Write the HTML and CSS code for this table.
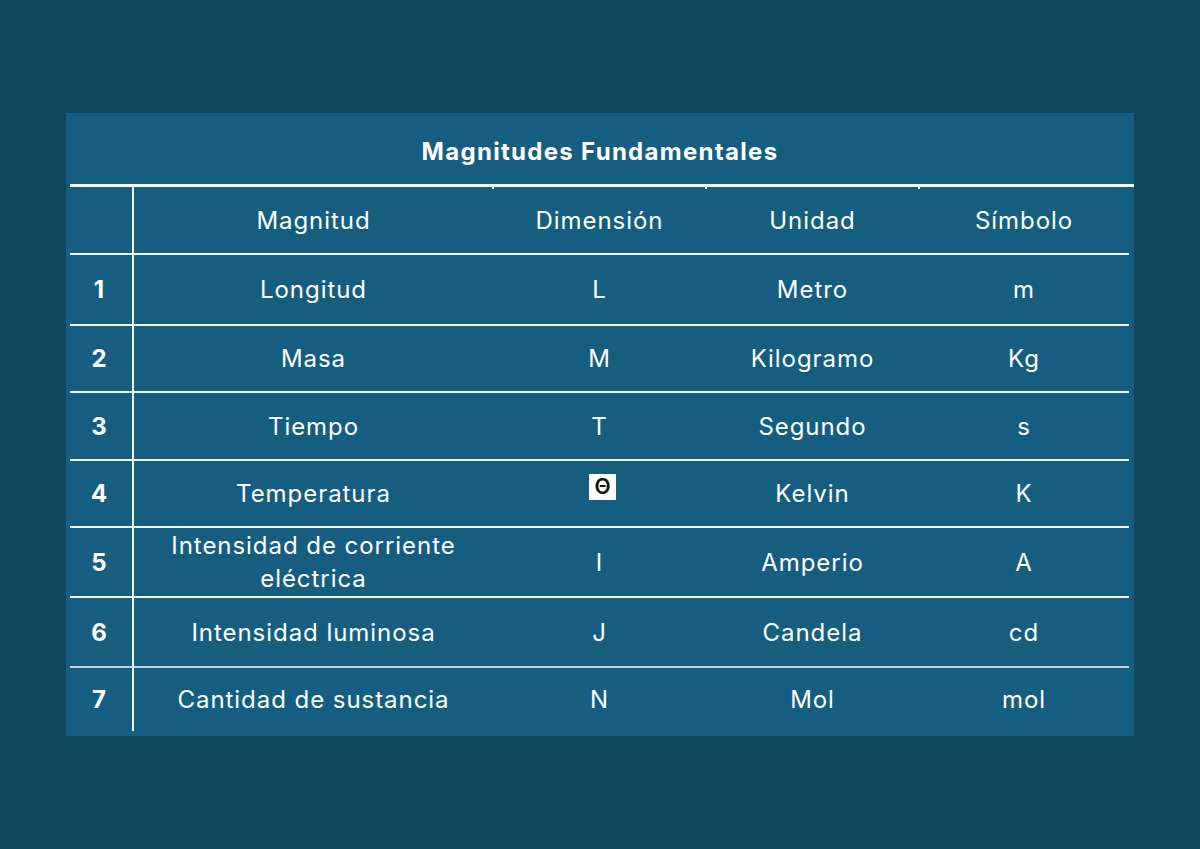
FILE: index.html
```html
<!DOCTYPE html>
<html lang="es">
<head>
<meta charset="utf-8">
<title>Magnitudes Fundamentales</title>
<link rel="stylesheet" href="styles.css">
</head>
<body>
<div class="panel">
  <div class="title">Magnitudes Fundamentales</div>
  <div class="rule"></div>
  <div class="table">
    <div class="cell num head"></div>
    <div class="cell head">Magnitud</div>
    <div class="cell head tick">Dimensión</div>
    <div class="cell head tick">Unidad</div>
    <div class="cell head tick">Símbolo</div>

    <div class="cell num r1">1</div>
    <div class="cell r1">Longitud</div>
    <div class="cell r1">L</div>
    <div class="cell r1">Metro</div>
    <div class="cell r1">m</div>

    <div class="cell num r2">2</div>
    <div class="cell r2">Masa</div>
    <div class="cell r2">M</div>
    <div class="cell r2">Kilogramo</div>
    <div class="cell r2">Kg</div>

    <div class="cell num r3">3</div>
    <div class="cell r3">Tiempo</div>
    <div class="cell r3">T</div>
    <div class="cell r3">Segundo</div>
    <div class="cell r3">s</div>

    <div class="cell num r4">4</div>
    <div class="cell r4">Temperatura</div>
    <div class="cell r4"><span class="theta">Θ</span></div>
    <div class="cell r4">Kelvin</div>
    <div class="cell r4">K</div>

    <div class="cell num r5">5</div>
    <div class="cell r5 two">Intensidad de corriente<br>eléctrica</div>
    <div class="cell r5">I</div>
    <div class="cell r5">Amperio</div>
    <div class="cell r5">A</div>

    <div class="cell num r6 soft">6</div>
    <div class="cell r6 soft">Intensidad luminosa</div>
    <div class="cell r6 soft">J</div>
    <div class="cell r6 soft">Candela</div>
    <div class="cell r6 soft">cd</div>

    <div class="cell num r7 last">7</div>
    <div class="cell r7 last">Cantidad de sustancia</div>
    <div class="cell r7 last">N</div>
    <div class="cell r7 last">Mol</div>
    <div class="cell r7 last">mol</div>
  </div>
</div>
</body>
</html>
```

FILE: styles.css
```css
html, body {
  margin: 0;
  padding: 0;
}
body {
  background: #11465f;
  width: 1200px;
  height: 849px;
  overflow: hidden;
  font-family: Inter, "Noto Sans", "Liberation Sans", sans-serif;
  color: #ffffff;
}
.panel {
  margin: 113px 0 0 66px;
  width: 1068px;
  height: 623px;
  background: #165e7f;
  box-sizing: border-box;
  padding-left: 4px;
}
.title {
  height: 71px;
  box-sizing: border-box;
  padding-top: 24px;
  text-align: center;
  font-size: 24px;
  font-weight: 700;
  letter-spacing: 1.3px;
  line-height: 30px;
  padding-right: 4px;
}
.rule {
  height: 3px;
  width: 1064px;
  background: #ffffff;
}
.table {
  display: grid;
  grid-template-columns: 64px 359px 213px 213px 210px;
  grid-template-rows: 68px 71px 67px 68px 67px 70px 70px 63px;
}
.cell {
  display: flex;
  align-items: center;
  justify-content: center;
  text-align: center;
  font-size: 24px;
  letter-spacing: 0.95px;
  line-height: 33px;
  border-bottom: 2px solid #f2f7fa;
  position: relative;
}
.cell.soft {
  border-bottom-color: #bcd5e1;
}
.cell.last {
  border-bottom: none;
}
.num {
  font-weight: 700;
  letter-spacing: 0;
  border-right: 2px solid #f2f7fa;
  padding-right: 4px;
}
.cell.num.soft {
  border-bottom-color: #bcd5e1;
}
.tick::before {
  content: "";
  position: absolute;
  left: -1px;
  top: 0;
  width: 2px;
  height: 2px;
  background: #ffffff;
}
.theta {
  display: inline-block;
  width: 27px;
  height: 26px;
  background: #ffffff;
  color: #111111;
  font-size: 21px;
  font-weight: 600;
  letter-spacing: 0;
  line-height: 26px;
  text-align: center;
  margin-top: -13px;
  margin-left: 6px;
}
```
